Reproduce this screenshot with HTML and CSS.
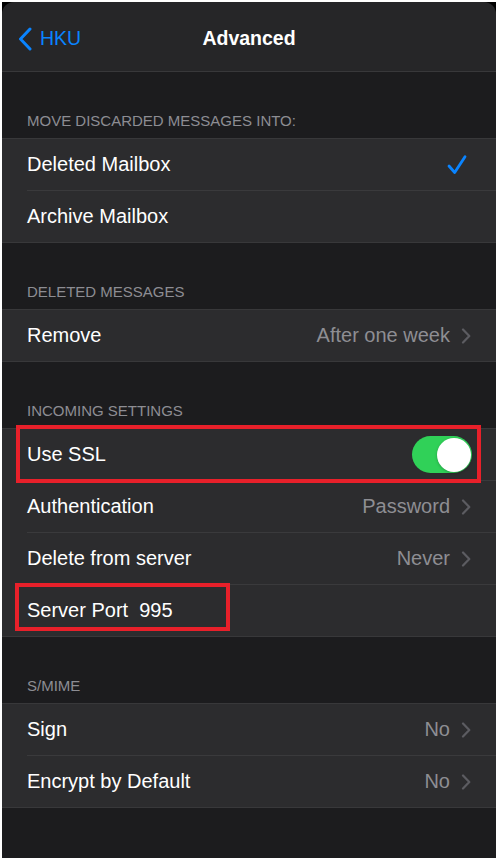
FILE: index.html
```html
<!DOCTYPE html>
<html>
<head>
<meta charset="utf-8">
<link rel="stylesheet" href="styles.css">
</head>
<body>
<div class="screen">
  <div class="nav-wrap">
    <div class="nav">
      <div class="back">
        <svg class="back-icon" width="16" height="24" viewBox="0 0 16 24"><path d="M13 2 L3.5 12 L13 22" fill="none" stroke="#0a84ff" stroke-width="3" stroke-linecap="round" stroke-linejoin="round"/></svg>
        <span class="back-text">HKU</span>
      </div>
      <div class="title">Advanced</div>
      <div></div>
    </div>
  </div>

  <div class="section-header">MOVE DISCARDED MESSAGES INTO:</div>
  <div class="group">
    <div class="row">
      <span class="label">Deleted Mailbox</span>
      <svg class="check" width="20" height="21" viewBox="0 0 20 21"><path d="M2 12 L7.7 18.5 L18 2.7" fill="none" stroke="#0a84ff" stroke-width="2.8" stroke-linecap="round" stroke-linejoin="round"/></svg>
    </div>
    <div class="row">
      <span class="label">Archive Mailbox</span>
    </div>
  </div>

  <div class="section-header">DELETED MESSAGES</div>
  <div class="group">
    <div class="row">
      <span class="label">Remove</span>
      <span class="value">After one week</span>
      <svg class="chev" width="10" height="16" viewBox="0 0 10 16"><path d="M2 1.5 L8.3 8 L2 14.5" fill="none" stroke="#5c5c61" stroke-width="2.2" stroke-linecap="round" stroke-linejoin="round"/></svg>
    </div>
  </div>

  <div class="section-header">INCOMING SETTINGS</div>
  <div class="group">
    <div class="row">
      <span class="label">Use SSL</span>
      <span class="toggle"><span class="knob"></span></span>
    </div>
    <div class="row">
      <span class="label">Authentication</span>
      <span class="value">Password</span>
      <svg class="chev" width="10" height="16" viewBox="0 0 10 16"><path d="M2 1.5 L8.3 8 L2 14.5" fill="none" stroke="#5c5c61" stroke-width="2.2" stroke-linecap="round" stroke-linejoin="round"/></svg>
    </div>
    <div class="row">
      <span class="label">Delete from server</span>
      <span class="value">Never</span>
      <svg class="chev" width="10" height="16" viewBox="0 0 10 16"><path d="M2 1.5 L8.3 8 L2 14.5" fill="none" stroke="#5c5c61" stroke-width="2.2" stroke-linecap="round" stroke-linejoin="round"/></svg>
    </div>
    <div class="row">
      <span class="label-inline">Server Port</span>
      <span class="field">995</span>
    </div>
  </div>

  <div class="section-header">S/MIME</div>
  <div class="group">
    <div class="row">
      <span class="label">Sign</span>
      <span class="value">No</span>
      <svg class="chev" width="10" height="16" viewBox="0 0 10 16"><path d="M2 1.5 L8.3 8 L2 14.5" fill="none" stroke="#5c5c61" stroke-width="2.2" stroke-linecap="round" stroke-linejoin="round"/></svg>
    </div>
    <div class="row">
      <span class="label">Encrypt by Default</span>
      <span class="value">No</span>
      <svg class="chev" width="10" height="16" viewBox="0 0 10 16"><path d="M2 1.5 L8.3 8 L2 14.5" fill="none" stroke="#5c5c61" stroke-width="2.2" stroke-linecap="round" stroke-linejoin="round"/></svg>
    </div>
  </div>

  <div class="highlight highlight-ssl"></div>
  <div class="highlight highlight-port"></div>
</div>
</body>
</html>
```

FILE: styles.css
```css
html, body {
  margin: 0;
  padding: 0;
  background: #ffffff;
}

body {
  font-family: "Liberation Sans", Arial, sans-serif;
  -webkit-font-smoothing: antialiased;
}

.screen {
  position: relative;
  margin: 2px 0 0 2px;
  width: 494px;
  height: 856px;
  background: #1c1c1e;
  overflow: hidden;
}

.nav-wrap {
  background: #000000;
}

.nav {
  height: 70px;
  box-sizing: border-box;
  padding-top: 3px;
  background: #262628;
  border-radius: 12px 12px 0 0;
  border-bottom: 1px solid #38383a;
  display: grid;
  grid-template-columns: 1fr auto 1fr;
  align-items: center;
}

.back {
  display: flex;
  align-items: center;
  padding-left: 15px;
  gap: 7px;
}

.back-icon {
  display: block;
  margin-top: 1px;
}

.back-text {
  color: #0a84ff;
  font-size: 19.5px;
}

.title {
  color: #ffffff;
  font-size: 19.5px;
  font-weight: bold;
}

.section-header {
  height: 66px;
  box-sizing: border-box;
  display: flex;
  align-items: flex-end;
  padding: 0 0 8px 25px;
  color: #8d8d93;
  font-size: 15px;
  line-height: 18px;
}

.group {
  background: #2c2c2e;
  border-top: 1px solid #38383a;
  border-bottom: 1px solid #38383a;
  padding-left: 25px;
}

.row {
  height: 51px;
  display: flex;
  align-items: center;
  padding-right: 25px;
  color: #ffffff;
  font-size: 20px;
}

.row + .row {
  border-top: 1px solid #3a3a3c;
}

.label {
  flex: 1;
  white-space: nowrap;
}

.label-inline {
  white-space: nowrap;
}

.value {
  color: #8e8e93;
  margin-right: 11px;
}

.chev {
  display: block;
}

.check {
  display: block;
  margin-right: 4px;
}

.field {
  margin-left: 11px;
}

.toggle {
  width: 60px;
  height: 37px;
  border-radius: 19px;
  background: #30d158;
  display: flex;
  align-items: center;
  justify-content: flex-end;
  padding-right: 1.5px;
  box-sizing: border-box;
  margin-right: -1px;
}

.knob {
  width: 34px;
  height: 34px;
  border-radius: 50%;
  background: #ffffff;
  box-shadow: 0 1px 3px rgba(0, 0, 0, 0.25);
}

.highlight {
  position: absolute;
  box-sizing: border-box;
  border: 4px solid #e8202a;
}

.highlight-ssl {
  left: 14px;
  top: 423px;
  width: 465px;
  height: 58px;
}

.highlight-port {
  left: 13px;
  top: 581px;
  width: 215px;
  height: 48px;
}
```
